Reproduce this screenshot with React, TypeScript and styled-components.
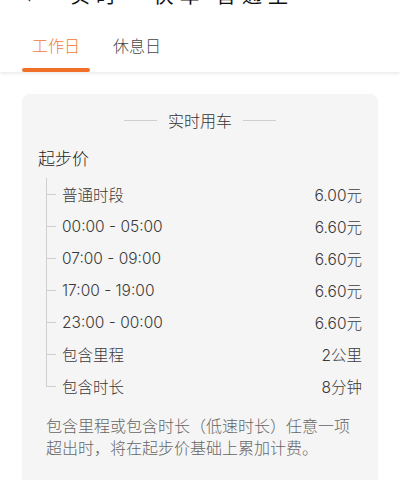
import styled, { createGlobalStyle } from "styled-components";

const GlobalStyle = createGlobalStyle`
	html, body {
		margin: 0;
		padding: 0;
		background: #ffffff;
		font-family: "Noto Sans CJK SC", "Noto Sans", sans-serif;
		font-weight: 300;
		overflow: hidden;
	}
`;

const Page = styled.div`
	width: 400px;
	height: 480px;
	overflow: hidden;
	background: #ffffff;
`;

const Header = styled.div`
	display: flex;
	align-items: center;
	height: 24px;
	margin-top: -17px;
	padding-left: 26px;
	font-family: "Noto Sans CJK SC", serif;
	font-size: 20px;
	font-weight: 400;
	line-height: 24px;
	color: #111;
`;

const Back = styled.span`
	width: 44px;
	font-size: 18px;
`;

const Title = styled.span`
	letter-spacing: 6px;
	white-space: pre;
`;

const Tabs = styled.div`
	display: flex;
	height: 65px;
	padding-left: 22px;
	box-shadow: 0 2px 3px rgba(0, 0, 0, 0.08);
`;

const Tab = styled.div<{ $active?: boolean }>`
	position: relative;
	width: ${(p) => (p.$active ? "68px" : "auto")};
	margin-right: ${(p) => (p.$active ? "23px" : "0")};
	display: flex;
	justify-content: center;
	padding-top: 26px;
	font-size: 16px;
	line-height: 24px;
	color: ${(p) => (p.$active ? "#ef7a3a" : "#444")};

	&::after {
		content: "";
		display: ${(p) => (p.$active ? "block" : "none")};
		position: absolute;
		left: 0;
		right: 0;
		bottom: 0;
		height: 4px;
		border-radius: 2px;
		background: #f07028;
	}
`;

const Card = styled.div`
	margin: 22px 22px 0;
	background: #f5f5f5;
	border-radius: 8px;
	padding: 14px 16px 30px 16px;
`;

const Divider = styled.div`
	display: flex;
	align-items: center;
	justify-content: center;
	gap: 11px;
	font-size: 16px;
	line-height: 24px;
	color: #333;

	&::before,
	&::after {
		content: "";
		width: 33px;
		height: 1px;
		background: #cfcfcf;
	}
`;

const Section = styled.div`
	margin-top: 14px;
	font-size: 17px;
	line-height: 24px;
	color: #222;
`;

const Tree = styled.div`
	margin-top: 8px;
	margin-left: 8px;
	display: flex;
	flex-direction: column;
`;

const Row = styled.div<{ $last?: boolean }>`
	position: relative;
	display: flex;
	justify-content: space-between;
	align-items: center;
	height: 32px;
	padding-left: 16px;
	font-family: "Inter", "Noto Sans CJK SC", sans-serif;
	font-size: 15.5px;
	color: #3a3a3a;

	&::before {
		content: "";
		position: absolute;
		left: 0;
		top: 0;
		bottom: ${(p) => (p.$last ? "50%" : "0")};
		width: 1px;
		background: #cfcfcf;
	}

	&::after {
		content: "";
		position: absolute;
		left: 0;
		top: 50%;
		width: 10px;
		height: 1px;
		background: #cfcfcf;
	}
`;

const Note = styled.p`
	margin: 12px 0 0 8px;
	max-width: 312px;
	font-size: 16px;
	line-height: 22px;
	color: #666;
`;

const rows = [
	{ label: "普通时段", value: "6.00元" },
	{ label: "00:00 - 05:00", value: "6.60元" },
	{ label: "07:00 - 09:00", value: "6.60元" },
	{ label: "17:00 - 19:00", value: "6.60元" },
	{ label: "23:00 - 00:00", value: "6.60元" },
	{ label: "包含里程", value: "2公里" },
	{ label: "包含时长", value: "8分钟" },
];

export default function App() {
	return (
		<Page>
			<GlobalStyle />
			<Header>
				<Back>‹</Back>
				<Title>实时   快车 普通型</Title>
			</Header>
			<Tabs>
				<Tab $active>工作日</Tab>
				<Tab>休息日</Tab>
			</Tabs>
			<Card>
				<Divider>实时用车</Divider>
				<Section>起步价</Section>
				<Tree>
					{rows.map((r, i) => (
						<Row key={r.label} $last={i === rows.length - 1}>
							<span>{r.label}</span>
							<span>{r.value}</span>
						</Row>
					))}
				</Tree>
				<Note>
					包含里程或包含时长（低速时长）任意一项超出时，将在起步价基础上累加计费。
				</Note>
			</Card>
		</Page>
	);
}
